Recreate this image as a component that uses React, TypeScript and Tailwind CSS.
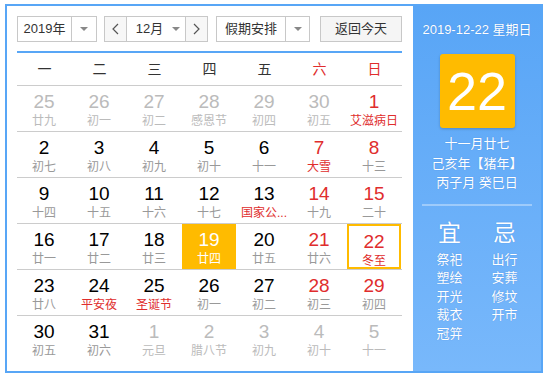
import React from 'react';

type Day = {
  n: number;
  sub: string;
  other?: boolean;
  redNum?: boolean;
  redSub?: boolean;
  selected?: boolean;
  today?: boolean;
};

const WEEKDAYS = ['一', '二', '三', '四', '五', '六', '日'];

const ROWS: Day[][] = [
  [
    { n: 25, sub: '廿九', other: true },
    { n: 26, sub: '初一', other: true },
    { n: 27, sub: '初二', other: true },
    { n: 28, sub: '感恩节', other: true },
    { n: 29, sub: '初四', other: true },
    { n: 30, sub: '初五', other: true },
    { n: 1, sub: '艾滋病日', redNum: true, redSub: true },
  ],
  [
    { n: 2, sub: '初七' },
    { n: 3, sub: '初八' },
    { n: 4, sub: '初九' },
    { n: 5, sub: '初十' },
    { n: 6, sub: '十一' },
    { n: 7, sub: '大雪', redNum: true, redSub: true },
    { n: 8, sub: '十三', redNum: true },
  ],
  [
    { n: 9, sub: '十四' },
    { n: 10, sub: '十五' },
    { n: 11, sub: '十六' },
    { n: 12, sub: '十七' },
    { n: 13, sub: '国家公...', redSub: true },
    { n: 14, sub: '十九', redNum: true },
    { n: 15, sub: '二十', redNum: true },
  ],
  [
    { n: 16, sub: '廿一' },
    { n: 17, sub: '廿二' },
    { n: 18, sub: '廿三' },
    { n: 19, sub: '廿四', selected: true },
    { n: 20, sub: '廿五' },
    { n: 21, sub: '廿六', redNum: true },
    { n: 22, sub: '冬至', redNum: true, redSub: true, today: true },
  ],
  [
    { n: 23, sub: '廿八' },
    { n: 24, sub: '平安夜', redSub: true },
    { n: 25, sub: '圣诞节', redSub: true },
    { n: 26, sub: '初一' },
    { n: 27, sub: '初二' },
    { n: 28, sub: '初三', redNum: true },
    { n: 29, sub: '初四', redNum: true },
  ],
  [
    { n: 30, sub: '初五' },
    { n: 31, sub: '初六' },
    { n: 1, sub: '元旦', other: true },
    { n: 2, sub: '腊八节', other: true },
    { n: 3, sub: '初九', other: true },
    { n: 4, sub: '初十', other: true },
    { n: 5, sub: '十一', other: true },
  ],
];

const YI = ['祭祀', '塑绘', '开光', '裁衣', '冠笄'];
const JI = ['出行', '安葬', '修坟', '开市'];

const FONT = "font-['Liberation_Sans','Noto_Sans_CJK_SC',sans-serif]";

function Caret() {
  return <span className="h-0 w-0 border-x-[4px] border-t-[4px] border-x-transparent border-t-[#888]" />;
}

function Chevron({ dir }: { dir: 'left' | 'right' }) {
  return (
    <svg width="7" height="12" viewBox="0 0 7 12" fill="none" stroke="#555" strokeWidth="1.2">
      {dir === 'left' ? <polyline points="6,1 1,6 6,11" /> : <polyline points="1,1 6,6 1,11" />}
    </svg>
  );
}

function DayCell({ d }: { d: Day }) {
  let numColor = 'text-[#000]';
  let subColor = 'text-[#999]';
  if (d.other) {
    numColor = 'text-[#bbb]';
    subColor = 'text-[#bbb]';
  }
  if (d.redNum) numColor = 'text-[#e02d2d]';
  if (d.redSub) subColor = 'text-[#e02d2d]';
  if (d.selected) {
    numColor = 'text-white';
    subColor = 'text-white';
  }

  return (
    <div className="flex h-[45px] pr-px">
      <div
        className={`flex flex-1 flex-col items-center pt-[4px] ${d.selected ? 'bg-[#ffbb00]' : ''} ${
          d.today ? 'border-2 border-[#ffbb00] pt-[2px]' : ''
        }`}
      >
        <span className={`text-[19px] leading-[23px] ${numColor}`}>{d.n}</span>
        <span className={`text-[12px] leading-[16px] ${subColor}`}>{d.sub}</span>
      </div>
    </div>
  );
}

export default function App() {
  return (
    <div className={`pl-[5px] pt-[4px] ${FONT}`}>
      <div className="flex h-[369px] w-[538px] border-2 border-[#58a6f6] bg-white">
        <div className="flex w-[406px] flex-col pl-[10px] pr-[11px] pt-[10px]">
          {/* controls */}
          <div className="flex h-[26px] text-[13px] text-[#333]">
            <div className="flex w-[80px] border border-[#c8c8c8]">
              <span className="flex flex-1 items-center justify-center">2019年</span>
              <span className="flex w-[25px] items-center justify-center border-l border-[#c8c8c8]">
                <Caret />
              </span>
            </div>
            <div className="ml-[7px] flex w-[104px] border border-[#c8c8c8]">
              <span className="flex w-[22px] items-center justify-center border-r border-[#c8c8c8] bg-[#f7f7f7]">
                <Chevron dir="left" />
              </span>
              <span className="flex flex-1 items-center justify-center gap-[9px] pl-[4px]">
                12月
                <Caret />
              </span>
              <span className="flex w-[22px] items-center justify-center border-l border-[#c8c8c8] bg-[#f7f7f7]">
                <Chevron dir="right" />
              </span>
            </div>
            <div className="ml-[8px] flex w-[94px] border border-[#c8c8c8]">
              <span className="flex flex-1 items-center justify-center">假期安排</span>
              <span className="flex w-[24px] items-center justify-center border-l border-[#c8c8c8]">
                <Caret />
              </span>
            </div>
            <button className="ml-[10px] flex w-[82px] items-center justify-center border border-[#c8c8c8] bg-[#f5f5f5] text-[#333]">
              返回今天
            </button>
          </div>

          <div className="mt-[9px] h-[2px] bg-[#58a6f6]" />

          {/* weekdays */}
          <div className="grid h-[32px] grid-cols-7 items-center text-[14px]">
            {WEEKDAYS.map((w, i) => (
              <span key={w} className={`text-center ${i >= 5 ? 'text-[#e02d2d]' : 'text-[#333]'}`}>
                {w}
              </span>
            ))}
          </div>

          {/* days */}
          {ROWS.map((row, ri) => (
            <div key={ri} className="grid grid-cols-7 border-t border-[#cccccc]">
              {row.map((d, di) => (
                <DayCell key={di} d={d} />
              ))}
            </div>
          ))}
        </div>

        {/* side panel */}
        <div className="flex w-[130px] flex-col items-center bg-gradient-to-b from-[#58a5f6] to-[#78b8fb] text-white [text-shadow:0_0_1px_rgba(0,60,160,0.35)]">
          <div className="mt-[15px] text-[13px] leading-[18px]">2019-12-22 星期日</div>
          <div className="mt-[15px] flex h-[74px] w-[75px] items-center justify-center rounded-[3px] bg-[#ffbb00] text-[54px] leading-none shadow-[0_1px_3px_rgba(0,0,0,0.2)] [text-shadow:none]">
            22
          </div>
          <div className="mt-[6px] flex flex-col items-center text-[13px] leading-[19.5px]">
            <span>十一月廿七</span>
            <span>己亥年【猪年】</span>
            <span>丙子月 癸巳日</span>
          </div>
          <div className="mt-[11px] h-[2px] w-[110px] bg-white/35" />
          <div className="mt-[13px] grid w-[110px] grid-cols-2">
            <div className="flex flex-col items-center">
              <span className="text-[23px] leading-[28px]">宜</span>
              <div className="mt-[4px] flex flex-col items-center text-[13px] leading-[18.5px]">
                {YI.map((s) => (
                  <span key={s}>{s}</span>
                ))}
              </div>
            </div>
            <div className="flex flex-col items-center">
              <span className="text-[23px] leading-[28px]">忌</span>
              <div className="mt-[4px] flex flex-col items-center text-[13px] leading-[18.5px]">
                {JI.map((s) => (
                  <span key={s}>{s}</span>
                ))}
              </div>
            </div>
          </div>
        </div>
      </div>
    </div>
  );
}
